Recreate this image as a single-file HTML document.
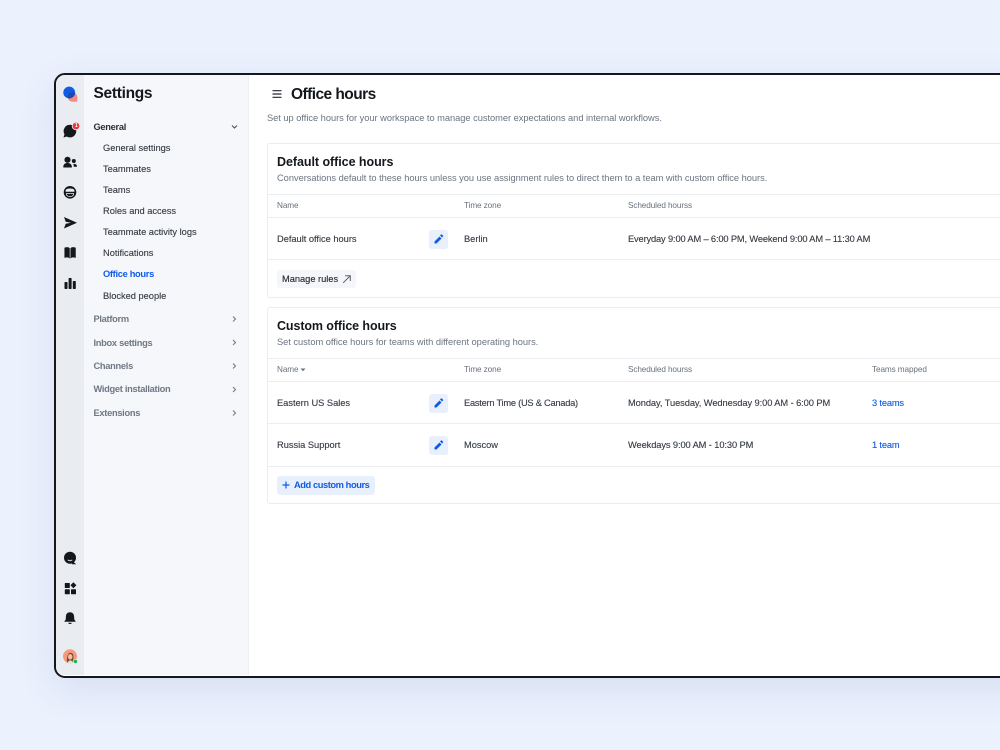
<!DOCTYPE html>
<html><head><meta charset="utf-8"><style>
*{box-sizing:border-box}
html,body{margin:0;width:1000px;height:750px;overflow:hidden;background:#ebf1fd;font-family:"Liberation Sans",sans-serif}
#app{position:absolute;left:54px;top:73px;width:1000px;height:605px;background:#fff;border:2px solid #14171c;border-radius:11px;box-shadow:0 12px 36px rgba(70,100,160,.12);overflow:hidden}
.a{position:absolute;left:0;top:0;width:1000px;height:750px;overflow:hidden}
.t{position:absolute;white-space:nowrap;line-height:14px;height:14px;font-size:9.3px;color:#343a42;letter-spacing:-.02px;-webkit-text-stroke:.12px}
.m{font-weight:bold;color:#2b3038;letter-spacing:-.3px;-webkit-text-stroke:0}
.g{color:#6f7884;font-weight:bold;letter-spacing:-.3px;-webkit-text-stroke:0}
.s{color:#6b7480;letter-spacing:-.03px;-webkit-text-stroke:0}
.h{font-size:8.2px;color:#69717c;letter-spacing:-.1px;-webkit-text-stroke:0}
.l{color:#0f5be6;letter-spacing:-.17px}
.ttl{font-size:12.5px;font-weight:bold;color:#14171c;-webkit-text-stroke:0}
.big{height:18px;line-height:18px;font-size:15.5px;font-weight:bold;color:#14171c;-webkit-text-stroke:0}
.ln{position:absolute;height:1px;background:#eceef2}
.card{position:absolute;left:267px;width:760px;border:1px solid #eaecf0;border-radius:3px;background:#fff}
.pen{position:absolute;left:429px;width:19px;height:19px;background:#e9f0fd;border-radius:3px}
svg{position:absolute;overflow:visible}
</style></head><body>
<div id="app"></div>
<div class="a">
<div style="position:absolute;left:56px;top:75px;width:28px;height:600px;background:#e9ecf1;border-radius:9px 0 0 9px"></div>
<div style="position:absolute;left:84px;top:75px;width:165px;height:600px;background:#f6f7fa;border-right:1px solid #eef0f3"></div>

<!-- rail icons -->
<svg style="left:0;top:0" width="1000" height="750" viewBox="0 0 1000 750">
<defs><clipPath id="lg"><circle cx="69.200" cy="92.500" r="5.900"/></clipPath></defs>
<path d="M72.500 92.300a4.800 4.800 0 0 1 4.800 4.800v4.600h-4.800a4.700 4.700 0 0 1 0-9.400z" fill="#f28b86"/>
<circle cx="69.200" cy="92.500" r="5.900" fill="#0f5be6"/>
<path d="M72.500 92.300a4.800 4.800 0 0 1 4.800 4.800v4.600h-4.800a4.700 4.700 0 0 1 0-9.400z" fill="#1d4aa8" clip-path="url(#lg)"/>

<path d="M70 124.800a6.300 6.300 0 1 1-3.300 11.700l-3.200 1 1-3.200a6.300 6.300 0 0 1 5.500-9.500z" fill="#14171c"/>
<circle cx="76" cy="126" r="3.800" fill="#e5383b" stroke="#e9ecf1" stroke-width=".8"/>

<circle cx="67.500" cy="159.800" r="3.100" fill="#14171c"/><path d="M63.300 167.500c-.2-3.300 1.800-4.500 4.200-4.500s4.500 1.200 4.400 4.500z" fill="#14171c"/>
<circle cx="73.800" cy="161" r="2" fill="#14171c"/><path d="M73.500 164c2.200-.4 3.600 1 3.500 2.800h-3.300z" fill="#14171c"/>

<circle cx="70" cy="192.300" r="6.300" fill="#14171c"/><path d="M65.600 190.200a4.500 2.200 0 0 1 8.800 0v1.600h-8.800z" fill="#e9ecf1"/><path d="M66.500 193.500h7v.8a3.500 2.300 0 0 1-7 0z" fill="#14171c" stroke="#e9ecf1" stroke-width=".8"/>

<path d="M64 217l13 5.800L64 228.500l1.700-4.700 5.300-1-5.300-1z" fill="#14171c"/>

<path d="M64.800 248c2-.7 3.900-.5 4.600.5v9.300c-1-.8-2.900-1-4.600-.4zM75.400 248c-2-.7-3.900-.5-4.600.5v9.300c1-.8 2.900-1 4.600-.4z" fill="#14171c" stroke="#14171c" stroke-width=".7"/>

<rect x="64.500" y="282" width="3" height="7" rx=".7" fill="#14171c"/><rect x="68.600" y="278" width="3" height="11" rx=".7" fill="#14171c"/><rect x="72.800" y="281" width="3" height="8" rx=".7" fill="#14171c"/>

<circle cx="70" cy="557.800" r="6" fill="#14171c"/><path d="M73 561.500l3.200 2.700h-4.500z" fill="#14171c"/><path d="M67.800 559.800c1.200 1.200 3.200 1.200 4.400 0" stroke="#e9ecf1" stroke-width="1" fill="none"/>

<rect x="64.800" y="583" width="5" height="5" rx=".5" fill="#14171c"/><rect x="64.800" y="589.200" width="5" height="5" rx=".5" fill="#14171c"/><rect x="71" y="589.200" width="5" height="5" rx=".5" fill="#14171c"/><path d="M73.400 582.300l3 3-3 3-3-3z" fill="#14171c"/>

<path d="M70 612.300c2.800 0 4 2 4.100 4.200l.2 3 1.500 2.200H64.200l1.500-2.200.2-3c.1-2.200 1.300-4.200 4.100-4.200z" fill="#14171c"/><path d="M68.500 623.300h3" stroke="#14171c" stroke-width="1.200"/>

<circle cx="70" cy="656.300" r="7" fill="#f59a7c"/>
<path d="M67 662.500c-.4-3 .2-9.500 3.200-9.700 2.800-.1 3.400 2.300 3.200 5l-.5 4z" fill="#7a4c3c"/>
<ellipse cx="70.200" cy="656.800" rx="2.200" ry="2.800" fill="#f2bfa4"/>
<path d="M67.500 663.200c.4-2 1.400-2.700 2.800-2.700s2.400.7 2.800 2.700z" fill="#e7dccf"/>
<circle cx="75.500" cy="661.500" r="2" fill="#12b84e" stroke="#e9ecf1" stroke-width=".5"/>

<!-- chevrons -->
<g fill="none" stroke="#4a5059" stroke-width="1.100">
<path d="M232 125.500l2.500 2.500 2.500-2.500"/>
</g>
<g fill="none" stroke="#757d88" stroke-width="1.100">
<path d="M233 316.500l2.500 2.500-2.500 2.500M233 340l2.500 2.500-2.500 2.500M233 363.500l2.500 2.500-2.500 2.500M233 387l2.500 2.500-2.500 2.500M233 410.500l2.500 2.500-2.500 2.500"/>
</g>
<!-- hamburger -->
<path d="M272.500 90.700h9M272.500 94h9M272.500 97.300h9" stroke="#23272e" stroke-width="1.200"/>
</svg>
<div class="t" style="left:75px;top:123px;width:3px;font-size:5px;color:#fff;line-height:6px;height:6px;letter-spacing:0;font-weight:bold;-webkit-text-stroke:0">1</div>

<!-- sidebar text -->
<div class="t big" style="left:93.500px;top:85px;letter-spacing:-.3px">Settings</div>
<div class="t m" style="left:93.500px;top:120px">General</div>
<div class="t" style="left:103px;top:141px">General settings</div>
<div class="t" style="left:103px;top:162px">Teammates</div>
<div class="t" style="left:103px;top:183px">Teams</div>
<div class="t" style="left:103px;top:204px">Roles and access</div>
<div class="t" style="left:103px;top:225px">Teammate activity logs</div>
<div class="t" style="left:103px;top:246px">Notifications</div>
<div class="t l" style="left:103px;top:267px;font-weight:bold;letter-spacing:-.32px;-webkit-text-stroke:0">Office hours</div>
<div class="t" style="left:103px;top:288.500px">Blocked people</div>
<div class="t g" style="left:93.500px;top:312px">Platform</div>
<div class="t g" style="left:93.500px;top:335.500px">Inbox settings</div>
<div class="t g" style="left:93.500px;top:359px">Channels</div>
<div class="t g" style="left:93.500px;top:382px">Widget installation</div>
<div class="t g" style="left:93.500px;top:405.500px">Extensions</div>

<!-- header -->
<div class="t big" style="left:291px;top:85.500px;letter-spacing:-.55px">Office hours</div>
<div class="t s" style="left:267px;top:111px">Set up office hours for your workspace to manage customer expectations and internal workflows.</div>

<!-- card 1 -->
<div class="card" style="top:143px;height:155px"></div>
<div class="t ttl" style="left:277px;top:155px;letter-spacing:-.05px">Default office hours</div>
<div class="t s" style="left:277px;top:171px">Conversations default to these hours unless you use assignment rules to direct them to a team with custom office hours.</div>
<div class="ln" style="left:268px;top:194px;width:732px"></div>
<div class="t h" style="left:277px;top:199px">Name</div>
<div class="t h" style="left:464px;top:199px">Time zone</div>
<div class="t h" style="left:628px;top:199px">Scheduled hourss</div>
<div class="ln" style="left:268px;top:217px;width:732px"></div>
<div class="t" style="left:277px;top:232px">Default office hours</div>
<div class="pen" style="top:230px"></div>
<div class="t" style="left:464px;top:232px">Berlin</div>
<div class="t" style="left:628px;top:232px;letter-spacing:-.15px">Everyday 9:00 AM – 6:00 PM, Weekend 9:00 AM – 11:30 AM</div>
<div class="ln" style="left:268px;top:259px;width:732px"></div>
<div style="position:absolute;left:277px;top:270px;width:79px;height:18px;background:#f5f6f9;border-radius:3px"></div>
<div class="t" style="left:282px;top:272px;color:#23272e">Manage rules</div>
<svg style="left:342px;top:274px" width="10" height="10" viewBox="0 0 10 10"><path d="M1.200 8.800L8 2M3 1.700h5.300V7" fill="none" stroke="#5c636d" stroke-width="1"/></svg>

<!-- card 2 -->
<div class="card" style="top:307px;height:197px"></div>
<div class="t ttl" style="left:277px;top:319px;letter-spacing:-.1px">Custom office hours</div>
<div class="t s" style="left:277px;top:335px">Set custom office hours for teams with different operating hours.</div>
<div class="ln" style="left:268px;top:358px;width:732px"></div>
<div class="t h" style="left:277px;top:363px">Name</div>
<svg style="left:300px;top:368px" width="6" height="4"><path d="M.5 .5h5L3 3.200z" fill="#69717c"/></svg>
<div class="t h" style="left:464px;top:363px">Time zone</div>
<div class="t h" style="left:628px;top:363px">Scheduled hourss</div>
<div class="t h" style="left:872px;top:363px">Teams mapped</div>
<div class="ln" style="left:268px;top:381px;width:732px"></div>
<div class="t" style="left:277px;top:396px">Eastern US Sales</div>
<div class="pen" style="top:394px"></div>
<div class="t" style="left:464px;top:396px;letter-spacing:-.25px">Eastern Time (US &amp; Canada)</div>
<div class="t" style="left:628px;top:396px;letter-spacing:-.08px">Monday, Tuesday, Wednesday 9:00 AM - 6:00 PM</div>
<div class="t l" style="left:872px;top:396px">3 teams</div>
<div class="ln" style="left:268px;top:423px;width:732px"></div>
<div class="t" style="left:277px;top:438px">Russia Support</div>
<div class="pen" style="top:436px"></div>
<div class="t" style="left:464px;top:438px">Moscow</div>
<div class="t" style="left:628px;top:438px;letter-spacing:-.1px">Weekdays 9:00 AM - 10:30 PM</div>
<div class="t l" style="left:872px;top:438px">1 team</div>
<div class="ln" style="left:268px;top:466px;width:732px"></div>
<div style="position:absolute;left:277px;top:476px;width:98px;height:19px;background:#e9f0fd;border-radius:3px"></div>
<svg style="left:282px;top:481px" width="8" height="8"><path d="M4 .5v7M.5 4h7" stroke="#0f5be6" stroke-width="1.200"/></svg>
<div class="t l" style="left:294px;top:478px;font-weight:bold;letter-spacing:-.42px;-webkit-text-stroke:0">Add custom hours</div>

<!-- pencils -->
<svg style="left:0;top:0" width="1000" height="750" viewBox="0 0 1000 750">
<path d="M434.500 243.500v-2l5-5 2 2-5 5zM440 235.500l1-1a.6.6 0 0 1 .9 0l1.100 1.100a.6.6 0 0 1 0 .9l-1 1z" fill="#0f5be6"/>
<path d="M434.500 407.500v-2l5-5 2 2-5 5zM440 399.500l1-1a.6.6 0 0 1 .9 0l1.100 1.100a.6.6 0 0 1 0 .9l-1 1z" fill="#0f5be6"/>
<path d="M434.500 449.500v-2l5-5 2 2-5 5zM440 441.500l1-1a.6.6 0 0 1 .9 0l1.100 1.100a.6.6 0 0 1 0 .9l-1 1z" fill="#0f5be6"/>
</svg>
</div>
</body></html>
